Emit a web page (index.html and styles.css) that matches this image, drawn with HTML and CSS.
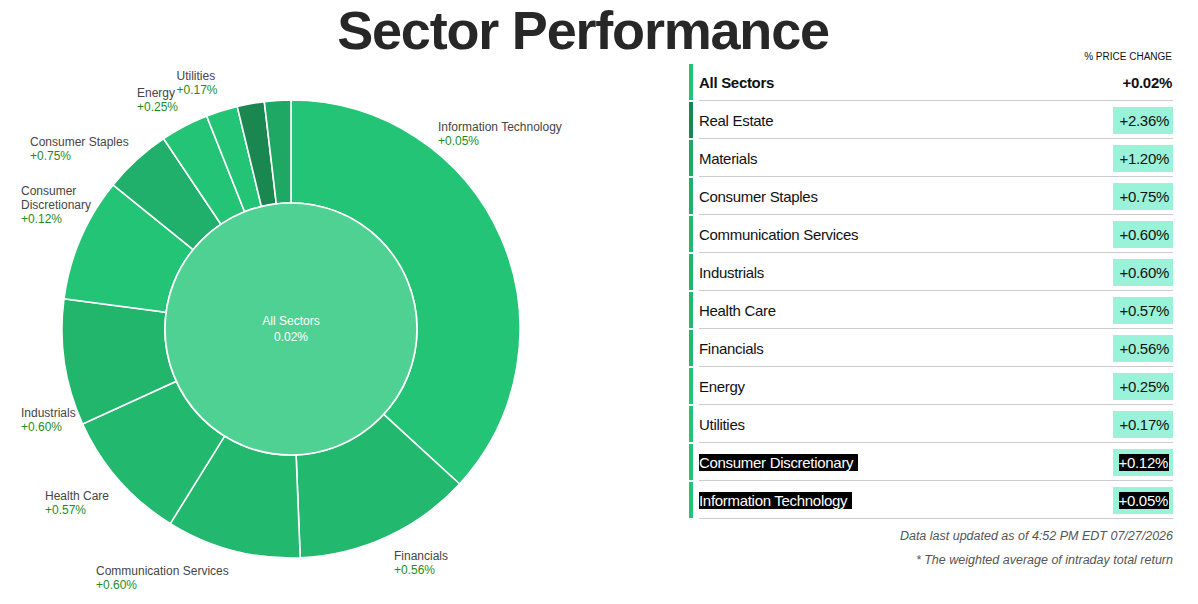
FILE: index.html
```html
<!DOCTYPE html>
<html lang="en">
<head>
<meta charset="utf-8">
<title>Sector Performance</title>
<link rel="stylesheet" href="styles.css">
</head>
<body>
<header class="page-head">
  <h1 class="title">Sector Performance</h1>
</header>
<main class="layout">
  <svg class="chart" width="680" height="553" viewBox="0 51 680 553" xmlns="http://www.w3.org/2000/svg">
    <g class="ring">
      <path class="shade-a" d="M291 100 A229 229 0 0 1 459.6 484 L383.7 414.3 A126 126 0 0 0 291 203 Z"/>
      <path class="shade-b" d="M459.6 484 A229 229 0 0 1 300.2 557.8 L296.1 454.9 A126 126 0 0 0 383.7 414.3 Z"/>
      <path class="shade-b" d="M300.2 557.8 A229 229 0 0 1 170.3 523.6 L224.6 436.1 A126 126 0 0 0 296.1 454.9 Z"/>
      <path class="shade-b" d="M170.3 523.6 A229 229 0 0 1 82.6 424 L176.3 381.3 A126 126 0 0 0 224.6 436.1 Z"/>
      <path class="shade-b2" d="M82.6 424 A229 229 0 0 1 64 298.7 L166.1 312.3 A126 126 0 0 0 176.3 381.3 Z"/>
      <path class="shade-a" d="M64 298.7 A229 229 0 0 1 113 184.9 L193.1 249.7 A126 126 0 0 0 166.1 312.3 Z"/>
      <path class="shade-c" d="M113 184.9 A229 229 0 0 1 163.6 138.7 L220.9 224.3 A126 126 0 0 0 193.1 249.7 Z"/>
      <path class="shade-a" d="M163.6 138.7 A229 229 0 0 1 206.7 116.1 L244.6 211.8 A126 126 0 0 0 220.9 224.3 Z"/>
      <path class="shade-a" d="M206.7 116.1 A229 229 0 0 1 237.2 106.4 L261.4 206.5 A126 126 0 0 0 244.6 211.8 Z"/>
      <path class="shade-e" d="M237.2 106.4 A229 229 0 0 1 264.3 101.6 L276.3 203.9 A126 126 0 0 0 261.4 206.5 Z"/>
      <path class="shade-d" d="M264.3 101.6 A229 229 0 0 1 291 100 L291 203 A126 126 0 0 0 276.3 203.9 Z"/>
    </g>
    <circle class="core" cx="291" cy="329" r="126"/>
    <text class="core-text" x="291" y="325">All Sectors</text>
    <text class="core-text" x="291" y="341">0.02%</text>

    <g class="labels">
      <text x="176.5" y="80" class="lbl-name">Utilities</text>
      <text x="176.5" y="94" class="lbl-val">+0.17%</text>
      <text x="137" y="97" class="lbl-name">Energy</text>
      <text x="137" y="111" class="lbl-val">+0.25%</text>
      <text x="30" y="146" class="lbl-name">Consumer Staples</text>
      <text x="30" y="160" class="lbl-val">+0.75%</text>
      <text x="21" y="194.5" class="lbl-name">Consumer</text>
      <text x="21" y="208.5" class="lbl-name">Discretionary</text>
      <text x="21" y="222.5" class="lbl-val">+0.12%</text>
      <text x="438" y="131" class="lbl-name">Information Technology</text>
      <text x="438" y="145" class="lbl-val">+0.05%</text>
      <text x="21" y="417" class="lbl-name">Industrials</text>
      <text x="21" y="431" class="lbl-val">+0.60%</text>
      <text x="45" y="499.5" class="lbl-name">Health Care</text>
      <text x="45" y="513.5" class="lbl-val">+0.57%</text>
      <text x="96" y="574.5" class="lbl-name">Communication Services</text>
      <text x="96" y="588.5" class="lbl-val">+0.60%</text>
      <text x="394" y="559.5" class="lbl-name">Financials</text>
      <text x="394" y="573.5" class="lbl-val">+0.56%</text>
    </g>
  </svg>

  <section class="panel">
    <div class="col-head">% PRICE CHANGE</div>
    <ul class="rows">
      <li class="row total">
        <span class="bar bg-a"></span>
        <div class="row-body"><span class="name">All Sectors</span><span class="chg plain">+0.02%</span></div>
      </li>
      <li class="row">
        <span class="bar bg-e"></span>
        <div class="row-body"><span class="name">Real Estate</span><span class="chg">+2.36%</span></div>
      </li>
      <li class="row">
        <span class="bar bg-d"></span>
        <div class="row-body"><span class="name">Materials</span><span class="chg">+1.20%</span></div>
      </li>
      <li class="row">
        <span class="bar bg-c"></span>
        <div class="row-body"><span class="name">Consumer Staples</span><span class="chg">+0.75%</span></div>
      </li>
      <li class="row">
        <span class="bar bg-b"></span>
        <div class="row-body"><span class="name">Communication Services</span><span class="chg">+0.60%</span></div>
      </li>
      <li class="row">
        <span class="bar bg-b2"></span>
        <div class="row-body"><span class="name">Industrials</span><span class="chg">+0.60%</span></div>
      </li>
      <li class="row">
        <span class="bar bg-b"></span>
        <div class="row-body"><span class="name">Health Care</span><span class="chg">+0.57%</span></div>
      </li>
      <li class="row">
        <span class="bar bg-b"></span>
        <div class="row-body"><span class="name">Financials</span><span class="chg">+0.56%</span></div>
      </li>
      <li class="row">
        <span class="bar bg-a"></span>
        <div class="row-body"><span class="name">Energy</span><span class="chg">+0.25%</span></div>
      </li>
      <li class="row">
        <span class="bar bg-a"></span>
        <div class="row-body"><span class="name">Utilities</span><span class="chg">+0.17%</span></div>
      </li>
      <li class="row">
        <span class="bar bg-a"></span>
        <div class="row-body"><span class="name sel">Consumer Discretionary</span><span class="chg"><span class="sel sel-val">+0.12%</span></span></div>
      </li>
      <li class="row">
        <span class="bar bg-a"></span>
        <div class="row-body"><span class="name sel">Information Technology</span><span class="chg"><span class="sel sel-val">+0.05%</span></span></div>
      </li>
    </ul>
    <div class="notes">
      <p>Data last updated as of 4:52 PM EDT 07/27/2026</p>
      <p>* The weighted average of intraday total return</p>
    </div>
  </section>
</main>
</body>
</html>
```

FILE: styles.css
```css
* { box-sizing: border-box; }

html, body {
  margin: 0;
  padding: 0;
  background: #ffffff;
}

body {
  width: 1198px;
  height: 604px;
  overflow: hidden;
  font-family: "Liberation Sans", Arial, sans-serif;
  color: #111111;
}

.page-head {
  height: 51px;
  padding: 9px 32px 0 0;
  text-align: center;
}

.title {
  margin: 0;
  font-size: 54px;
  line-height: 42px;
  font-weight: 700;
  letter-spacing: -1.2px;
  color: #272727;
}

.layout {
  display: flex;
  gap: 9px;
  align-items: flex-start;
}

.chart {
  display: block;
  flex: 0 0 680px;
}

.ring path {
  stroke: #ffffff;
  stroke-width: 1.6;
  stroke-linejoin: miter;
}

.shade-a { fill: #24c476; }
.shade-b { fill: #22b86e; }
.shade-b2 { fill: #22b66d; }
.shade-c { fill: #21b06b; }
.shade-d { fill: #1fa764; }
.shade-e { fill: #1a8750; }

.core {
  fill: #50d194;
  stroke: #ffffff;
  stroke-width: 1.6;
}

.core-text {
  fill: #ffffff;
  font-family: "Liberation Sans", Arial, sans-serif;
  font-size: 12px;
  text-anchor: middle;
}

.labels text {
  font-family: "Liberation Sans", Arial, sans-serif;
  font-size: 12px;
}

.lbl-name { fill: #454545; }
.lbl-val { fill: #1d8c1d; }

.panel {
  flex: 0 0 484px;
  width: 484px;
}

.col-head {
  font-size: 10px;
  line-height: 12px;
  text-align: right;
  padding-right: 1px;
  color: #111111;
}

.rows {
  list-style: none;
  margin: 1px 0 0;
  padding: 0;
}

.row {
  display: flex;
  height: 37px;
  margin-bottom: 1px;
  font-size: 15px;
  letter-spacing: -0.3px;
}

.bar {
  flex: 0 0 4px;
  height: 36px;
}

.bg-a { background: #24c476; }
.bg-b { background: #22b86e; }
.bg-b2 { background: #22b66d; }
.bg-c { background: #21b06b; }
.bg-d { background: #1fa764; }
.bg-e { background: #1a8750; }

.row-body {
  flex: 1;
  display: flex;
  align-items: center;
  justify-content: space-between;
  margin-left: 6px;
  border-bottom: 1px solid #cccccc;
}

.name {
  white-space: nowrap;
}

.chg {
  width: 60px;
  height: 27px;
  line-height: 27px;
  padding-right: 4px;
  text-align: right;
  background: #9af3d9;
}

.chg.plain {
  background: transparent;
  padding-right: 1px;
}

.total .name,
.total .chg {
  font-weight: 700;
}

.sel {
  background: #000000;
  color: #ffffff;
  padding-right: 5px;
}

.sel-val {
  padding: 0 1px 0 0;
}

.notes {
  margin-top: 5px;
  text-align: right;
  font-style: italic;
  font-size: 12.5px;
  line-height: 24px;
  color: #555555;
}

.notes p {
  margin: 0;
}
```
